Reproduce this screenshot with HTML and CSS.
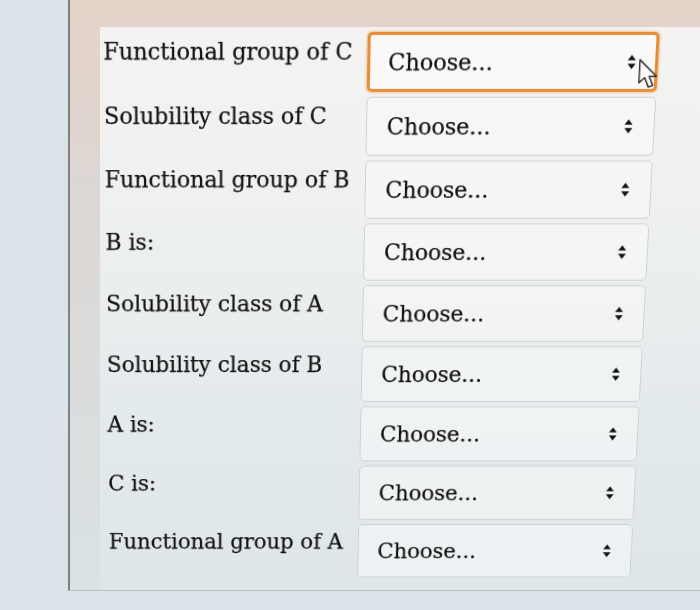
FILE: index.html
```html
<!DOCTYPE html>
<html lang="en">
<head>
    <meta charset="UTF-8">
    <title>Unknown identification</title>
    <link rel="stylesheet" href="styles.css">
</head>
<body>
    <div class="page">
        <div class="sheet">
            <form class="answers">
                <label class="answer-label">Functional group of C</label>
                <div class="select-box focused">
                    <span class="select-text">Choose...</span>
                    <svg class="select-arrows" viewBox="0 0 10 18"><path d="M5 1 L9.5 7 H0.5 Z M0.5 11 H9.5 L5 17 Z"/></svg>
                    <svg class="mouse-cursor" viewBox="0 0 24 38"><path d="M2 2 L2 29 L8.5 23 L13 34 L18 32 L13.5 21.5 L22 21.5 Z"/></svg>
                </div>

                <label class="answer-label">Solubility class of C</label>
                <div class="select-box">
                    <span class="select-text">Choose...</span>
                    <svg class="select-arrows" viewBox="0 0 10 18"><path d="M5 1 L9.5 7 H0.5 Z M0.5 11 H9.5 L5 17 Z"/></svg>
                </div>

                <label class="answer-label">Functional group of B</label>
                <div class="select-box">
                    <span class="select-text">Choose...</span>
                    <svg class="select-arrows" viewBox="0 0 10 18"><path d="M5 1 L9.5 7 H0.5 Z M0.5 11 H9.5 L5 17 Z"/></svg>
                </div>

                <label class="answer-label">B is:</label>
                <div class="select-box">
                    <span class="select-text">Choose...</span>
                    <svg class="select-arrows" viewBox="0 0 10 18"><path d="M5 1 L9.5 7 H0.5 Z M0.5 11 H9.5 L5 17 Z"/></svg>
                </div>

                <label class="answer-label">Solubility class of A</label>
                <div class="select-box">
                    <span class="select-text">Choose...</span>
                    <svg class="select-arrows" viewBox="0 0 10 18"><path d="M5 1 L9.5 7 H0.5 Z M0.5 11 H9.5 L5 17 Z"/></svg>
                </div>

                <label class="answer-label">Solubility class of B</label>
                <div class="select-box">
                    <span class="select-text">Choose...</span>
                    <svg class="select-arrows" viewBox="0 0 10 18"><path d="M5 1 L9.5 7 H0.5 Z M0.5 11 H9.5 L5 17 Z"/></svg>
                </div>

                <label class="answer-label">A is:</label>
                <div class="select-box">
                    <span class="select-text">Choose...</span>
                    <svg class="select-arrows" viewBox="0 0 10 18"><path d="M5 1 L9.5 7 H0.5 Z M0.5 11 H9.5 L5 17 Z"/></svg>
                </div>

                <label class="answer-label">C is:</label>
                <div class="select-box">
                    <span class="select-text">Choose...</span>
                    <svg class="select-arrows" viewBox="0 0 10 18"><path d="M5 1 L9.5 7 H0.5 Z M0.5 11 H9.5 L5 17 Z"/></svg>
                </div>

                <label class="answer-label">Functional group of A</label>
                <div class="select-box">
                    <span class="select-text">Choose...</span>
                    <svg class="select-arrows" viewBox="0 0 10 18"><path d="M5 1 L9.5 7 H0.5 Z M0.5 11 H9.5 L5 17 Z"/></svg>
                </div>
            </form>
        </div>
    </div>
</body>
</html>
```

FILE: styles.css
```css
* { margin: 0; padding: 0; box-sizing: border-box; }
:root {
    --page-bg: #dae3e8;
    --panel-top: #e5d2c8;
    --panel-bottom: #d9e2e5;
    --text: #141212;
    --border: #cfd1d0;
    --focus: #e68d36;
    --slab: "DejaVu Serif Condensed", "DejaVu Serif", serif;
}
body { background: var(--page-bg); color: var(--text); font-family: var(--slab); font-stretch: condensed; width: 700px; height: 610px; overflow: hidden; }
.page { margin-left: 68px; height: 591px; border-left: 2px solid #7e8082; border-bottom: 1px solid #b9c2c6; background: linear-gradient(180deg, var(--panel-top) 0%, #ddd7d3 30%, var(--panel-bottom) 100%); padding: 27px 0 0 30px; overflow: hidden; }
.sheet { height: 563px; background: linear-gradient(180deg, #f4f3f1 0%, #eef0f0 35%, #e3eaec 70%, #dde6e9 100%); }
/* the photo was taken at a slight angle, so the form leans back a little */
.answers { display: grid; grid-template-columns: 268px 292px; grid-auto-rows: 61px; row-gap: 5px; padding-top: 5px; transform-origin: 100px 0; transform: perspective(1200px) rotateX(-8deg); }
.answer-label { font-family: var(--slab); font-stretch: condensed; font-size: 25px; line-height: 32px; padding: 4px 0 0 3px; white-space: nowrap; -webkit-text-stroke: 0.25px var(--text); }
.select-box { position: relative; display: flex; align-items: center; justify-content: space-between; padding: 0 21px 0 20px; border: 1px solid var(--border); border-radius: 5px; background: rgba(250, 250, 249, 0.55); }
.select-box.focused { border: 3px solid var(--focus); padding-left: 18px; padding-right: 19px; box-shadow: 0 0 2px 1px rgba(230, 141, 54, 0.45); background: #faf9f7; }
.select-text { font-family: var(--slab); font-stretch: condensed; font-size: 25px; -webkit-text-stroke: 0.25px var(--text); }
.select-arrows { width: 9px; height: 17px; fill: var(--text); }
.mouse-cursor { position: absolute; right: -4px; top: 23px; width: 21px; height: 34px; fill: #fbfbfb; stroke: #2a2a2a; stroke-width: 1.6; stroke-linejoin: round; }
```
